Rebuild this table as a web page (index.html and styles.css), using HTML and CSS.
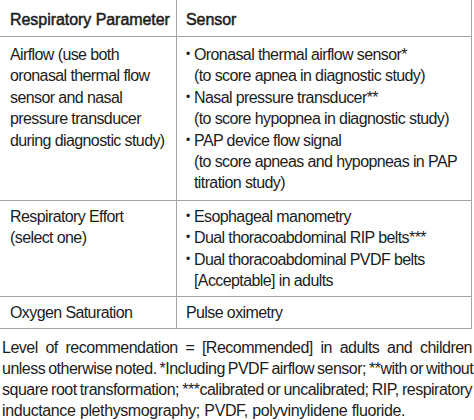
FILE: index.html
```html
<!DOCTYPE html>
<html>
<head>
<meta charset="utf-8">
<link rel="stylesheet" href="styles.css">
</head>
<body>
<table class="params">
  <thead>
    <tr>
      <th class="col-param">Respiratory Parameter</th>
      <th class="col-sensor">Sensor</th>
    </tr>
  </thead>
  <tbody>
    <tr class="row-airflow">
      <td class="col-param">Airflow (use both oronasal thermal flow sensor and nasal pressure transducer during diagnostic study)</td>
      <td class="col-sensor">
        <ul class="bullets">
          <li>Oronasal thermal airflow sensor*<br>(to score apnea in diagnostic study)</li>
          <li>Nasal pressure transducer**<br>(to score hypopnea in diagnostic study)</li>
          <li>PAP device flow signal<br>(to score apneas and hypopneas in PAP titration study)</li>
        </ul>
      </td>
    </tr>
    <tr class="row-effort">
      <td class="col-param">Respiratory Effort<br>(select one)</td>
      <td class="col-sensor">
        <ul class="bullets">
          <li>Esophageal manometry</li>
          <li>Dual thoracoabdominal RIP belts***</li>
          <li>Dual thoracoabdominal PVDF belts<br>[Acceptable] in adults</li>
        </ul>
      </td>
    </tr>
    <tr class="row-oxygen">
      <td class="col-param">Oxygen Saturation</td>
      <td class="col-sensor">Pulse oximetry</td>
    </tr>
  </tbody>
</table>
<p class="note"><span class="line">Level of recommendation = [Recommended] in adults and children</span> <span class="line">unless otherwise noted. *Including PVDF airflow sensor; **with or without</span> <span class="line">square root transformation; ***calibrated or uncalibrated; RIP, respiratory</span> <span class="line last">inductance plethysmography; PVDF, polyvinylidene fluoride.</span></p>
</body>
</html>
```
FILE: styles.css
```css
html, body {
  margin: 0;
  padding: 0;
  background: #ffffff;
}
body {
  width: 474px;
  font-family: "Liberation Sans", Arial, sans-serif;
  color: #1c1c1c;
  font-size: 16px;
  letter-spacing: -0.6px;
}
.params {
  width: 472px;
  border-collapse: collapse;
  table-layout: fixed;
}
.params th,
.params td {
  text-align: left;
  vertical-align: top;
  line-height: 21.4px;
  padding: 0;
  border-bottom: 1px solid #a3a3a3;
}
.params th {
  font-weight: normal;
  letter-spacing: -0.05px;
  -webkit-text-stroke: 0.5px #1c1c1c;
  height: 33px;
  vertical-align: middle;
  padding-top: 3px;
}
.params .col-param {
  width: 166px;
  padding-left: 10px;
  border-right: 1px solid #a3a3a3;
}
.params .col-sensor {
  padding-left: 9px;
  padding-right: 4px;
  border-right: 1px solid #a3a3a3;
}
.row-airflow td {
  padding-top: 7px;
  padding-bottom: 6px;
}
.row-effort td {
  padding-top: 5px;
  padding-bottom: 5px;
}
.row-oxygen td {
  padding-top: 5px;
  padding-bottom: 4px;
}
.bullets {
  list-style: none;
  margin: 0;
  padding: 0;
}
.bullets li {
  position: relative;
  padding-left: 8px;
}
.bullets li::before {
  content: "\2022";
  position: absolute;
  left: 0;
  top: 0;
  font-size: 12px;
}
.note {
  margin: 8px 0 0;
  padding: 0 2px 0 2px;
  width: 470px;
  font-size: 16px;
  line-height: 21px;
  letter-spacing: -0.5px;
  word-spacing: -1px;
}
.note .line {
  display: block;
  white-space: nowrap;
  text-align: justify;
  text-align-last: justify;
}
.note .line.last {
  text-align-last: left;
  letter-spacing: -0.4px;
  word-spacing: 0.5px;
}
```
